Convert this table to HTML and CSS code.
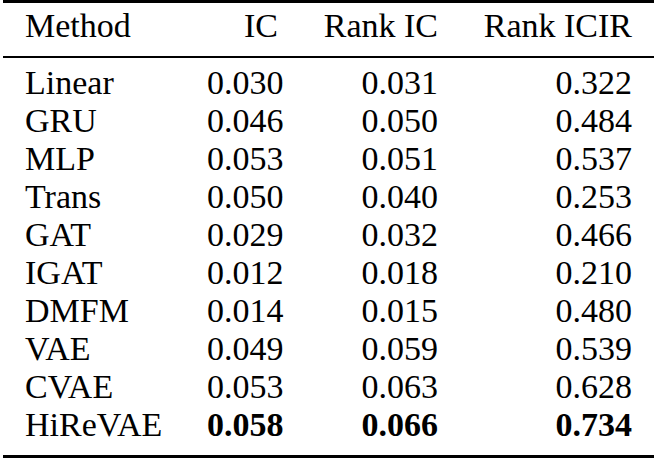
FILE: index.html
```html
<!DOCTYPE html>
<html lang="en">
<head>
<meta charset="utf-8">
<title>Results</title>
<link rel="stylesheet" href="styles.css">
</head>
<body>
<div class="page">
<table class="results">
<colgroup>
<col class="c-method">
<col class="c-ic">
<col class="c-ric">
<col class="c-ricir">
</colgroup>
<thead>
<tr><th class="name">Method</th><th>IC</th><th>Rank IC</th><th>Rank ICIR</th></tr>
</thead>
<tbody>
<tr><td class="name">Linear</td><td>0.030</td><td>0.031</td><td>0.322</td></tr>
<tr><td class="name">GRU</td><td>0.046</td><td>0.050</td><td>0.484</td></tr>
<tr><td class="name">MLP</td><td>0.053</td><td>0.051</td><td>0.537</td></tr>
<tr><td class="name">Trans</td><td>0.050</td><td>0.040</td><td>0.253</td></tr>
<tr><td class="name">GAT</td><td>0.029</td><td>0.032</td><td>0.466</td></tr>
<tr><td class="name">IGAT</td><td>0.012</td><td>0.018</td><td>0.210</td></tr>
<tr><td class="name">DMFM</td><td>0.014</td><td>0.015</td><td>0.480</td></tr>
<tr><td class="name">VAE</td><td>0.049</td><td>0.059</td><td>0.539</td></tr>
<tr><td class="name">CVAE</td><td>0.053</td><td>0.063</td><td>0.628</td></tr>
<tr><td class="name">HiReVAE</td><td class="best">0.058</td><td class="best">0.066</td><td class="best">0.734</td></tr>
</tbody>
</table>
</div>
</body>
</html>
```

FILE: styles.css
```css
html, body {
  margin: 0;
  padding: 0;
  background: #ffffff;
}

.page {
  padding: 0 4px 0 3px;
  width: 651px;
}

.results {
  width: 651px;
  table-layout: fixed;
  border-collapse: collapse;
  font-family: "Liberation Serif", "Times New Roman", serif;
  font-size: 34px;
  line-height: 38px;
  color: #000000;
  border-top: 3px solid #000000;
  border-bottom: 3px solid #000000;
}

.c-method { width: 182px; }
.c-ic { width: 115px; }
.c-ric { width: 160px; }
.c-ricir { width: 194px; }

.results th,
.results td {
  padding: 0 22px;
  text-align: right;
  font-weight: normal;
  white-space: nowrap;
}

.results .name {
  text-align: left;
}

.results thead th {
  padding-top: 4px;
  padding-bottom: 11px;
  border-bottom: 2px solid #000000;
}

.results tbody tr:first-child td {
  padding-top: 6px;
}

.results tbody tr:last-child td {
  padding-bottom: 11px;
}

.results .best {
  font-weight: bold;
}
```
